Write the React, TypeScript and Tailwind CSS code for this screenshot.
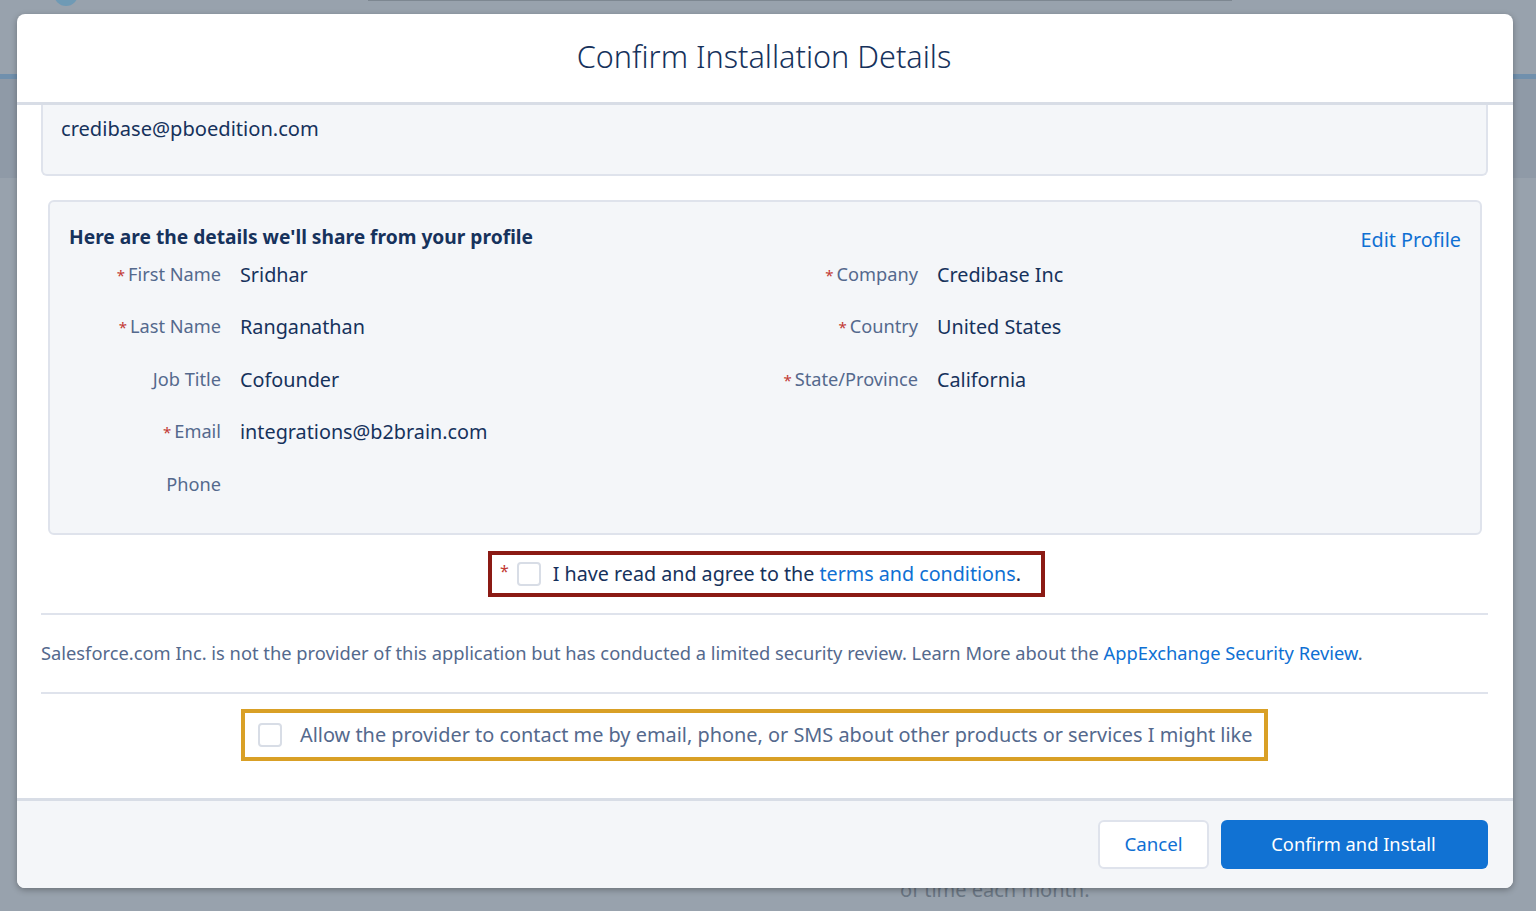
import React from "react";

const font = { fontFamily: '"Noto Sans", sans-serif' };

function Field({ label, value, required }: { label: string; value?: string; required?: boolean }) {
  return (
    <div className="flex h-[52.4px] items-start">
      <div className="w-[171px] shrink-0 pt-[6px] text-right text-[18.2px] leading-[28px] text-[#54698d]">
        {required && <span className="mr-[3px] text-[15px] text-[#c23934]">*</span>}
        {label}
      </div>
      <div className="ml-[19px] pt-[7px] text-[19.8px] leading-[28px] text-[#16325c]">{value}</div>
    </div>
  );
}

export default function App() {
  return (
    <div className="relative h-[911px] w-[1536px] overflow-hidden bg-[#98a2ad]" style={font}>
      <div className="absolute left-[54px] top-[-18px] h-[24px] w-[24px] rounded-full bg-[#6f9ab5]" />
      <div className="absolute left-[368px] top-0 h-[1px] w-[864px] bg-[#7d8791]" />
      <div className="absolute left-0 top-[74px] h-[5px] w-full bg-[#7090ad]" />
      <div className="absolute left-0 top-[79px] h-[99px] w-full bg-[#8f9aa7]" />
      <div className="absolute left-[900px] top-[878px] text-[20px] leading-[24px] text-[#6a7683]">of time each month.</div>

      <div className="relative pl-[17px] pt-[14px]">
        <div className="flex h-[874px] w-[1496px] flex-col overflow-hidden rounded-[8px] bg-white shadow-[0_2px_6px_rgba(0,0,0,0.3)]">
          <div className="flex h-[91px] shrink-0 items-center justify-center border-b-[3px] border-[#d8dde6] pb-[4px] pr-[2px]">
            <h1 className="text-[30.6px] font-light leading-[40px] text-[#16325c]">Confirm Installation Details</h1>
          </div>

          <div className="flex min-h-0 flex-1 flex-col pl-[24px] pr-[25px]">
            <div className="h-[71px] shrink-0 rounded-b-[6px] border-x-2 border-b-2 border-[#dfe3ec] bg-[#f4f6f9] pl-[18px] pt-[10px] text-[20.1px] leading-[28px] text-[#16325c]">
              credibase@pboedition.com
            </div>

            <div className="ml-[7px] mr-[6px] mt-[24px] h-[335px] shrink-0 rounded-[6px] border-2 border-[#dfe3ec] bg-[#f4f6f9]">
              <div className="flex items-start justify-between px-[19px] pt-[21px]">
                <h2 className="text-[19.2px] font-bold leading-[28px] text-[#16325c]">Here are the details we'll share from your profile</h2>
                <a className="mt-[3px] text-[19.8px] leading-[28px] text-[#0f70d3]">Edit Profile</a>
              </div>
              <div className="grid grid-cols-[697px_697px]">
                <div className="flex flex-col">
                  <Field required label="First Name" value="Sridhar" />
                  <Field required label="Last Name" value="Ranganathan" />
                  <Field label="Job Title" value="Cofounder" />
                  <Field required label="Email" value="integrations@b2brain.com" />
                  <Field label="Phone" />
                </div>
                <div className="flex flex-col">
                  <Field required label="Company" value="Credibase Inc" />
                  <Field required label="Country" value="United States" />
                  <Field required label="State/Province" value="California" />
                </div>
              </div>
            </div>

            <div className="ml-[447px] mt-[16px] flex h-[46px] w-[557px] shrink-0 items-center border-[4px] border-[#8b1a14] pl-[8px]">
              <span className="mb-[6px] text-[16px] leading-none text-[#c23934]">*</span>
              <span className="ml-[8px] h-[24px] w-[24px] shrink-0 rounded-[4px] border-2 border-[#d8dde6] bg-white" />
              <p className="ml-[12px] whitespace-nowrap text-[19.7px] leading-[28px] text-[#16325c]">
                I have read and agree to the <a className="text-[#0f70d3]">terms and conditions</a>.
              </p>
            </div>

            <div className="mt-[16px] h-[2px] shrink-0 bg-[#dfe3ec]" />
            <p className="mt-[24px] whitespace-nowrap text-[18.31px] leading-[28px] text-[#54698d]">
              Salesforce.com Inc. is not the provider of this application but has conducted a limited security review. Learn More about the <a className="text-[#0f70d3]">AppExchange Security Review</a>.
            </p>
            <div className="mt-[25px] h-[2px] shrink-0 bg-[#dfe3ec]" />

            <div className="ml-[200px] mt-[15px] flex h-[52px] w-[1027px] shrink-0 items-center border-[4px] border-[#d9a026] pl-[13px]">
              <span className="h-[24px] w-[24px] shrink-0 rounded-[4px] border-2 border-[#d8dde6] bg-white" />
              <p className="ml-[18px] whitespace-nowrap text-[19.9px] leading-[28px] text-[#54698d]">
                Allow the provider to contact me by email, phone, or SMS about other products or services I might like
              </p>
            </div>
          </div>

          <div className="flex h-[90px] shrink-0 items-start justify-end gap-[12px] border-t-[3px] border-[#d8dde6] bg-[#f4f6f9] pr-[25px] pt-[19px]">
            <button className="h-[49px] w-[111px] rounded-[6px] border-2 border-[#dfe3ec] bg-white pb-[1px] text-[18.7px] text-[#0f70d3]">Cancel</button>
            <button className="h-[49px] w-[267px] rounded-[6px] bg-[#1172d3] pb-[2px] pr-[2px] text-[18.3px] text-white">Confirm and Install</button>
          </div>
        </div>
      </div>
    </div>
  );
}
